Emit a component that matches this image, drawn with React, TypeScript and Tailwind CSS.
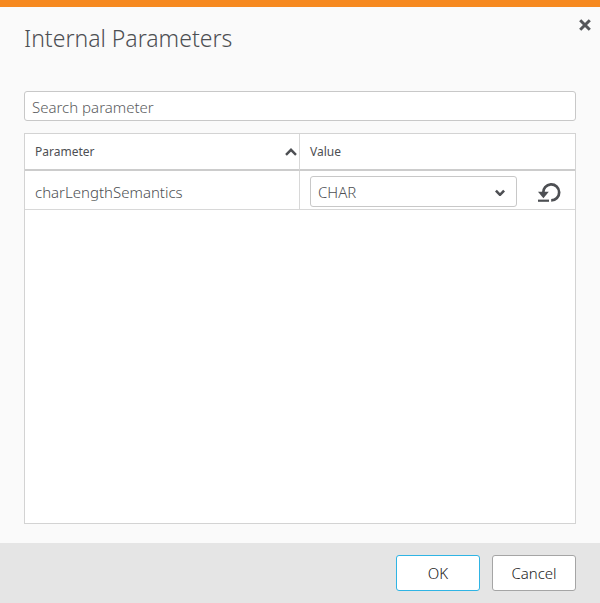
import { useState } from "react";

type Parameter = {
  name: string;
  value: string;
  options: string[];
};

const defaults: Parameter[] = [
  { name: "charLengthSemantics", value: "CHAR", options: ["CHAR", "BYTE"] },
];

function CloseIcon() {
  return (
    <svg viewBox="0 0 12 12" className="size-3" fill="none" stroke="currentColor" strokeWidth="3" aria-hidden="true">
      <path d="M1.2 1.2l9.6 9.6M10.8 1.2L1.2 10.8" />
    </svg>
  );
}

function SortIcon() {
  return (
    <svg viewBox="0 0 12 8" className="h-2 w-3" fill="none" stroke="currentColor" strokeWidth="2.4" aria-hidden="true">
      <path d="M1 6.8L6 1.8l5 5" />
    </svg>
  );
}

function ChevronIcon() {
  return (
    <svg viewBox="0 0 10 8" className="h-2 w-[10px]" fill="none" stroke="currentColor" strokeWidth="2.6" aria-hidden="true">
      <path d="M0.9 2.6L5 6.8l4.1-4.2" />
    </svg>
  );
}

function ResetIcon() {
  return (
    <svg viewBox="0 0 24 20" className="h-5 w-6" aria-hidden="true">
      <path d="M6.2 11A8 8 0 1 1 14.2 18.4" fill="none" stroke="currentColor" strokeWidth="2.7" />
      <path d="M1 9.8h10.8L6.4 16.2z" fill="currentColor" />
      <path d="M1 17.6h11v2.2H1z" fill="currentColor" />
    </svg>
  );
}

export default function App() {
  const [search, setSearch] = useState("");
  const [params, setParams] = useState(defaults);

  const setValue = (name: string, value: string) =>
    setParams(params.map((p) => (p.name === name ? { ...p, value } : p)));

  const reset = (name: string) =>
    setValue(name, defaults.find((p) => p.name === name)!.value);

  const rows = params.filter((p) => p.name.toLowerCase().includes(search.toLowerCase()));

  return (
    <div className="flex min-h-screen flex-col border-t-[7px] border-[#f68920] bg-[#fafafa] font-['Noto_Sans','Open_Sans',sans-serif] font-light text-[#4d4f53]">
      <header className="flex items-start justify-between pl-6 pr-[9px] pt-3">
        <h1 className="pt-1 text-[23px] leading-[30px]">Internal Parameters</h1>
        <button type="button" aria-label="Close" className="text-[#55565a]">
          <CloseIcon />
        </button>
      </header>

      <main className="flex flex-1 flex-col gap-3 px-6 pb-[19px] pt-[38px]">
        <input
          type="text"
          aria-label="Search parameter"
          placeholder="Search parameter"
          value={search}
          onChange={(e) => setSearch(e.target.value)}
          className="h-[30px] w-full rounded-[3px] border border-[#c8c8c8] bg-white px-[7px] pt-[2px] text-[15px] placeholder:text-[#5b5c60]"
        />

        <div className="flex-1 border border-[#d3d3d3] bg-white">
          <table className="w-full table-fixed border-separate border-spacing-0 text-left">
            <thead>
              <tr className="h-[37px] text-xs">
                <th className="border-b-2 border-r border-b-[#cccccc] border-r-[#d8d8d8] pl-[10px] pr-[2px] font-normal">
                  <div className="flex items-center justify-between">
                    Parameter
                    <SortIcon />
                  </div>
                </th>
                <th className="border-b-2 border-[#cccccc] px-[10px] font-normal">Value</th>
              </tr>
            </thead>
            <tbody>
              {rows.map((p) => (
                <tr key={p.name} className="h-[39px] text-[15px]">
                  <td className="border-b border-r border-[#d8d8d8] pl-[10px] pt-1">{p.name}</td>
                  <td className="border-b border-[#d8d8d8] pl-[10px] pr-[14px] pt-[3px]">
                    <div className="flex items-center justify-between gap-5">
                      <div className="grid flex-1 items-center">
                        <select
                          aria-label={p.name}
                          value={p.value}
                          onChange={(e) => setValue(p.name, e.target.value)}
                          className="col-start-1 row-start-1 h-[31px] w-full appearance-none rounded-[3px] border border-[#c8c8c8] bg-white px-[7px] pt-[2px]"
                        >
                          {p.options.map((o) => (
                            <option key={o}>{o}</option>
                          ))}
                        </select>
                        <span className="pointer-events-none col-start-1 row-start-1 mr-3 justify-self-end">
                          <ChevronIcon />
                        </span>
                      </div>
                      <button type="button" aria-label="Reset to default" onClick={() => reset(p.name)}>
                        <ResetIcon />
                      </button>
                    </div>
                  </td>
                </tr>
              ))}
            </tbody>
          </table>
        </div>
      </main>

      <footer className="flex justify-end gap-3 bg-[#e5e5e5] px-6 py-3 text-[15px] text-[#222222]">
        <button type="button" className="h-9 w-[84px] rounded-[3px] border border-[#2fb4e4] bg-white">
          OK
        </button>
        <button type="button" className="h-9 w-[84px] rounded-[3px] border border-[#a5a5a5] bg-white">
          Cancel
        </button>
      </footer>
    </div>
  );
}
